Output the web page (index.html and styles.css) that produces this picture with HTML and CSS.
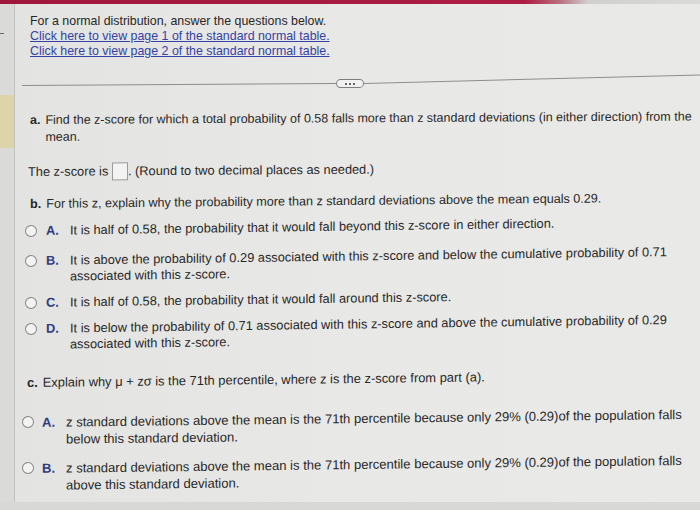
FILE: index.html
```html
<!DOCTYPE html>
<html lang="en">
<head>
<meta charset="utf-8">
<title>Normal distribution</title>
<link rel="stylesheet" href="styles.css">
</head>
<body>
<div class="screen">
  <div class="topbar"></div>
  <div class="main">
    <aside class="side">
      <div class="side-mark"></div>
      <div class="side-hl"></div>
    </aside>
    <div class="content">
      <div class="intro">
        <p class="line">For a normal distribution, answer the questions below.</p>
        <a class="link" href="#">Click here to view page 1 of the standard normal table.</a>
        <a class="link" href="#">Click here to view page 2 of the standard normal table.</a>
      </div>

      <div class="divider">
        <span class="rule rule-left"></span>
        <span class="pill"><i class="dot"></i><i class="dot"></i><i class="dot"></i></span>
        <span class="rule rule-right"></span>
      </div>

      <div class="q q-a">
        <span class="qlabel">a.</span>
        <span class="qtext">Find the z-score for which a total probability of 0.58 falls more than z standard deviations (in either direction) from the mean.</span>
      </div>

      <p class="answer">The z-score is <span class="box"></span>. (Round to two decimal places as needed.)</p>

      <div class="q q-b">
        <span class="qlabel">b.</span>
        <span class="qtext">For this z, explain why the probability more than z standard deviations above the mean equals 0.29.</span>
      </div>

      <div class="opts opts-b">
        <div class="opt opt-1">
          <span class="radio"></span><span class="letter">A.</span>
          <span class="otext">It is half of 0.58, the probability that it would fall beyond this z-score in either direction.</span>
        </div>
        <div class="opt opt-2">
          <span class="radio"></span><span class="letter">B.</span>
          <span class="otext">It is above the probability of 0.29 associated with this z-score and below the cumulative probability of 0.71 associated with this z-score.</span>
        </div>
        <div class="opt opt-3">
          <span class="radio"></span><span class="letter">C.</span>
          <span class="otext">It is half of 0.58, the probability that it would fall around this z-score.</span>
        </div>
        <div class="opt opt-4">
          <span class="radio"></span><span class="letter">D.</span>
          <span class="otext">It is below the probability of 0.71 associated with this z-score and above the cumulative probability of 0.29 associated with this z-score.</span>
        </div>
      </div>

      <div class="q q-c">
        <span class="qlabel">c.</span>
        <span class="qtext">Explain why μ + zσ is the 71th percentile, where z is the z-score from part (a).</span>
      </div>

      <div class="opts opts-c">
        <div class="opt opt-1">
          <span class="radio"></span><span class="letter">A.</span>
          <span class="otext">z standard deviations above the mean is the 71th percentile because only 29% (0.29)of the population falls below this standard deviation.</span>
        </div>
        <div class="opt opt-2">
          <span class="radio"></span><span class="letter">B.</span>
          <span class="otext">z standard deviations above the mean is the 71th percentile because only 29% (0.29)of the population falls above this standard deviation.</span>
        </div>
      </div>
    </div>
  </div>
  <div class="bottombar"></div>
</div>
</body>
</html>
```

FILE: styles.css
```css
* { box-sizing: border-box; }

html, body {
  margin: 0;
  padding: 0;
}

body {
  width: 700px;
  height: 510px;
  overflow: hidden;
  background: #e6e6e4;
  font-family: "Liberation Sans", Arial, sans-serif;
  color: #282828;
}

.screen {
  display: flex;
  flex-direction: column;
  height: 510px;
  background: linear-gradient(to right, #e3e3e1 0%, #e8e8e6 50%, #e9e9e7 100%);
}

.topbar {
  flex: none;
  height: 4px;
  background: linear-gradient(to right, #a0173d 0%, #ad1c45 75%, #b9707f 80%, #cfcfcf 84%, #dadada 100%);
}

.main {
  flex: 1;
  display: flex;
  min-height: 0;
}

.bottombar {
  flex: none;
  height: 8px;
  background: #d8d8d6;
}

.side {
  flex: none;
  width: 15px;
  background: #dadad8;
  border-right: 1px solid #c2c2c0;
  display: flex;
  flex-direction: column;
}

.side-mark {
  margin-top: 29px;
  width: 4px;
  height: 1px;
  background: #666;
}

.side-hl {
  margin-top: 61px;
  height: 53px;
  background: #ddd4aa;
}

.content {
  flex: 1;
  min-width: 0;
  padding-left: 15px;
  padding-right: 4px;
}

/* the photographed screen tilts slightly: each block leans up to the right */
.tilt-origin {
  transform-origin: 0 0;
}

/* intro */
.intro {
  margin-top: 10px;
  display: flex;
  flex-direction: column;
  align-items: flex-start;
  font-size: 12.4px;
  line-height: 15px;
}

.line {
  margin: 0;
}

.link {
  color: #3442a6;
  text-decoration: underline;
  text-underline-offset: 1px;
}

/* divider */
.divider {
  margin-top: 22px;
  margin-left: -8px;
  margin-right: -4px;
  height: 9px;
  display: flex;
  align-items: center;
  transform: skewY(-0.35deg);
  transform-origin: 0 0;
}

.rule {
  height: 1px;
  background: #8e8e8e;
}

.rule-left {
  width: 314px;
}

.rule-right {
  flex: 1;
  transform: skewY(-1.1deg);
  transform-origin: 0 0;
}

.pill {
  width: 28px;
  height: 9px;
  border: 1px solid #7e7e7e;
  border-radius: 5px;
  background: #f1f1f1;
  display: flex;
  align-items: center;
  justify-content: center;
  gap: 2px;
}

.dot {
  width: 2px;
  height: 2px;
  background: #666;
}

/* questions */
.q {
  display: flex;
  gap: 5px;
  transform-origin: 0 0;
}

.qlabel {
  flex: none;
  font-weight: bold;
}

.q-a {
  margin-top: 22px;
  font-size: 12.5px;
  line-height: 17px;
  transform: skewY(-0.3deg);
}

.answer {
  margin: 16px 0 0 -2px;
  font-size: 12.8px;
  line-height: 20px;
  transform: skewY(-0.4deg);
  transform-origin: 0 0;
}

.box {
  display: inline-block;
  width: 16px;
  height: 18px;
  vertical-align: -5px;
  border: 1px solid #9a9a9a;
  background: #f3f3f3;
}

.q-b {
  margin-top: 14px;
  font-size: 12.6px;
  line-height: 17px;
  transform: skewY(-0.55deg);
}

.q-c {
  margin-top: 21px;
  margin-left: -3px;
  font-size: 12.9px;
  line-height: 17px;
  transform: skewY(-0.7deg);
}

/* options */
.opts {
  display: flex;
  flex-direction: column;
  transform-origin: 0 0;
}

.opt {
  display: flex;
  align-items: flex-start;
}

.radio {
  flex: none;
  width: 12px;
  height: 12px;
  border: 1.5px solid #868686;
  border-radius: 50%;
  background: #f3f3f3;
}

.letter {
  flex: none;
  width: 24px;
  font-weight: bold;
  color: #2f3c80;
}

.opts-b {
  font-size: 12.8px;
  line-height: 16px;
  transform: skewY(-0.8deg);
}

.opts-b .radio {
  margin: 2px 9px 0 -5px;
}

.opts-b .opt-1 { margin-top: 10px; }
.opts-b .opt-2 { margin-top: 14px; }
.opts-b .opt-3 { margin-top: 10px; }
.opts-b .opt-4 { margin-top: 10px; }

.opts-c {
  font-size: 13.05px;
  line-height: 17px;
  transform: skewY(-0.7deg);
}

.opts-c .radio {
  margin: 2px 8px 0 -8px;
}

.opts-c .opt-1 { margin-top: 23px; }
.opts-c .opt-2 { margin-top: 12px; }
```
